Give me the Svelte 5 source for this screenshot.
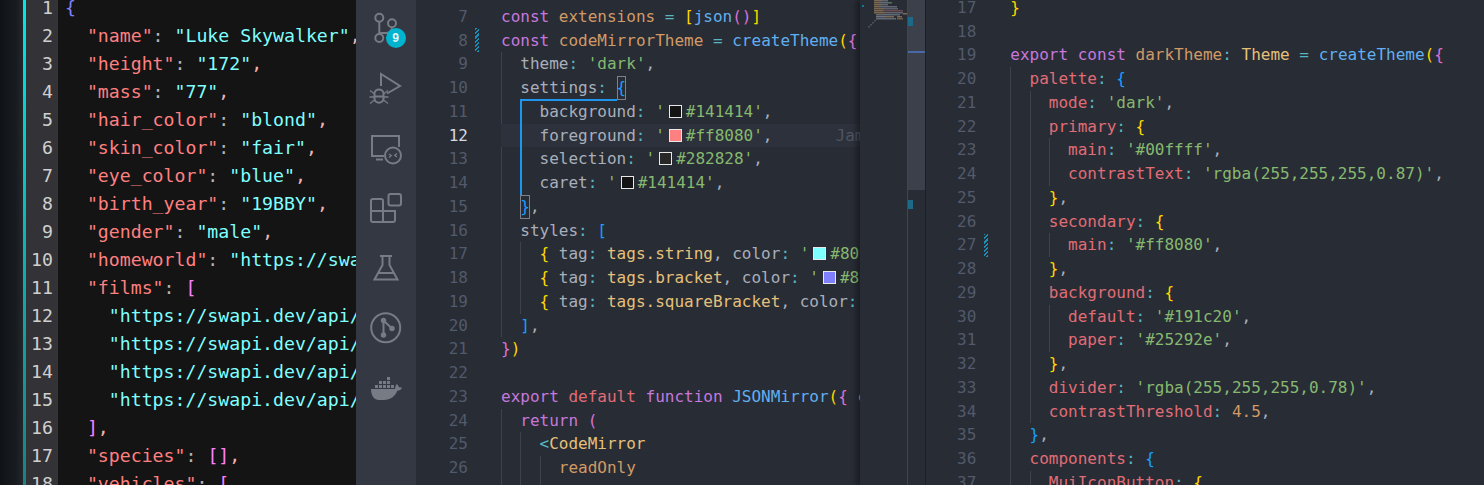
<script>
  const parse = (row) =>
    row.split('|').map((part) => {
      const i = part.indexOf('~');
      return i < 0 ? { c: '', s: part } : { c: part.slice(0, i), s: part.slice(i + 1) };
    });

  const jsonRows = [
    'jb~{',
    '  |jk~"name"|jp~: |js~"Luke Skywalker"|jc~,',
    '  |jk~"height"|jp~: |js~"172"|jc~,',
    '  |jk~"mass"|jp~: |js~"77"|jc~,',
    '  |jk~"hair_color"|jp~: |js~"blond"|jc~,',
    '  |jk~"skin_color"|jp~: |js~"fair"|jc~,',
    '  |jk~"eye_color"|jp~: |js~"blue"|jc~,',
    '  |jk~"birth_year"|jp~: |js~"19BBY"|jc~,',
    '  |jk~"gender"|jp~: |js~"male"|jc~,',
    '  |jk~"homeworld"|jp~: |js~"https://swapi.dev/api/planets/1/"|jc~,',
    '  |jk~"films"|jp~: |jm~[',
    '    |js~"https://swapi.dev/api/films/1/"|jc~,',
    '    |js~"https://swapi.dev/api/films/2/"|jc~,',
    '    |js~"https://swapi.dev/api/films/3/"|jc~,',
    '    |js~"https://swapi.dev/api/films/6/"',
    '  |jm~]|jc~,',
    '  |jk~"species"|jp~: |jm~[]|jc~,',
    '  |jk~"vehicles"|jp~: |jm~['
  ];

  const middleRows = [
    "k~const| |v~extensions| |o~=| |y~[|f~json|p~()|y~]",
    "k~const| |v~codeMirrorTheme| |o~=| |f~createTheme|y~(|p~{",
    "  theme|o~:| |s~'dark'|,",
    "  settings|o~:| |box~{",
    "    background|o~:| |s~'|sw~#141414|s~'|,",
    "    foreground|o~:| |s~'|sw~#ff8080|s~'|,|g~James",
    "    selection|o~:| |s~'|sw~#282828|s~'|,",
    "    caret|o~:| |s~'|sw~#141414|s~'|,",
    "  |box~}|,",
    "  styles|o~:| |b~[",
    "    |y~{| tag|o~:| |t~tags.string|, color|o~:| |s~'|sw~#80ffff|s~'| |y~}|,",
    "    |y~{| tag|o~:| |t~tags.bracket|, color|o~:| |s~'|sw~#8080ff|s~'| |y~}|,",
    "    |y~{| tag|o~:| |t~tags.squareBracket|, color|o~:| |s~'#ff80ff'| |y~}|,",
    "  |b~]|,",
    "p~}|y~)",
    "",
    "k~export| |r~default| |k~function| |f~JSONMirror|y~(|p~{| code",
    "  |k~return| |p~(",
    "    |o~<|t~CodeMirror",
    "      |v~readOnly",
    "      |v~value|o~=|b~{|v~code|b~}"
  ];

  const rightRows = [
    "y~}",
    "",
    "k~export| |k~const| |v~darkTheme|o~:| |t~Theme| |o~=| |f~createTheme|y~(|p~{",
    "  |r~palette|o~:| |b~{",
    "    |r~mode|o~:| |s~'dark'|,",
    "    |r~primary|o~:| |y~{",
    "      |r~main|o~:| |s~'#00ffff'|,",
    "      |r~contrastText|o~:| |s~'rgba(255,255,255,0.87)'|,",
    "    |y~}|,",
    "    |r~secondary|o~:| |y~{",
    "      |r~main|o~:| |s~'#ff8080'|,",
    "    |y~}|,",
    "    |r~background|o~:| |y~{",
    "      |r~default|o~:| |s~'#191c20'|,",
    "      |r~paper|o~:| |s~'#25292e'|,",
    "    |y~}|,",
    "    |r~divider|o~:| |s~'rgba(255,255,255,0.78)'|,",
    "    |r~contrastThreshold|o~:| |n~4.5|,",
    "  |b~}|,",
    "  |r~components|o~:| |b~{",
    "    |r~MuiIconButton|o~:| |y~{"
  ];

  const LH = 23.75;
  const INDENT = 19.27;
  // [depth, first line, last line], in file line numbers
  const middleGuides = [
    [0, 9, 20],
    [1, 17, 19],
    [0, 24, 28],
    [1, 25, 28],
    [2, 26, 28]
  ];
  const rightGuides = [
    [0, 20, 38],
    [1, 21, 34],
    [2, 23, 24],
    [2, 27, 27],
    [2, 30, 31],
    [1, 37, 38]
  ];

  const miniBars = [
    [874, 0, 8, '#7d6a55'], [882, 0, 6, '#5f6672'],
    [874, 2, 6, '#80684f'], [880, 2, 8, '#656c78'], [888, 2, 4, '#58705a'],
    [874, 4, 8, '#7d6a55'], [882, 4, 6, '#5f6672'],
    [874, 6, 6, '#80684f'], [880, 6, 17, '#626874'],
    [874, 8, 10, '#7b654f'], [884, 8, 14, '#5d5f6a'],
    [874, 10, 9, '#7d6a55'], [883, 10, 20, '#6b4a52'],
    [874, 12, 11, '#80684f'], [885, 12, 18, '#5f6672'], [903, 13, 4, '#7d6a55'],
    [876, 14, 18, '#626874'], [894, 14, 6, '#5f6672'],
    [876, 16, 10, '#6c7380'], [886, 16, 8, '#7d6a55'], [897, 16, 5, '#7d6a55'],
    [876, 18, 20, '#626874'], [897, 18, 6, '#6b5d50'],
    [874, 20, 2, '#4b505b'], [872, 22, 2, '#4b505b'], [870, 24, 2, '#4b505b'], [868, 26, 2, '#4b505b']
  ];
</script>

{#snippet rows(list, firstLine, activeLine)}
  {#each list as row, i}
    <div class="line" class:current={firstLine + i === activeLine}>
      {#each parse(row) as tok}
        {#if tok.c === 'sw'}
          <span class="swatch" style="background:{tok.s}"></span><span class="s">{tok.s}</span>
        {:else}
          <span class={tok.c}>{tok.s}</span>
        {/if}
      {/each}
    </div>
  {/each}
{/snippet}

{#snippet numbers(list, firstLine, activeLine)}
  {#each list as _, i}
    <div class="num" class:active={firstLine + i === activeLine}>{firstLine + i}</div>
  {/each}
{/snippet}

{#snippet guides(list, firstLine)}
  {#each list as [depth, from, to]}
    <i
      class="guide"
      style="left:{depth * INDENT}px;top:{(from - firstLine) * LH}px;height:{(to - from + 1) * LH}px"
    ></i>
  {/each}
{/snippet}

<main class="screen">
  <section class="json-pane">
    <div class="backdrop"></div>
    <div class="accent"></div>
    <div class="json-gutter">{@render numbers(jsonRows, 1, 0)}</div>
    <div class="json-code">{@render rows(jsonRows, 1, 0)}</div>
  </section>

  <nav class="activity">
    <div class="item">
      <svg viewBox="0 0 60 60">
        <circle cx="23.3" cy="19.7" r="4" />
        <circle cx="36" cy="25.3" r="4" />
        <circle cx="23.3" cy="40" r="4" />
        <path d="M23.3 24v12M36 29.3c0 4-3 5.700-6 5.700h-6.700" />
      </svg>
      <span class="badge">9</span>
    </div>
    <div class="item">
      <svg viewBox="0 0 60 60">
        <path d="M25 28V16l19 12-13 7.500" />
        <path d="M18.500 35.500c0-5.500 9-5.500 9 0v5c0 5.500-9 5.500-9 0zM18.500 38.500h9" />
        <path class="thin" d="M14 32.500l4.500 3.500M32 32.500L27.500 36M13.500 39h5M27.500 39h5M14 45.500l4.500-3.500M32 45.500L27.500 42" />
      </svg>
    </div>
    <div class="item">
      <svg viewBox="0 0 60 60">
        <path d="M28 38H16V18h27v11" />
        <path d="M20 41.500h7" />
        <circle cx="37" cy="37.5" r="8" />
        <path class="thin" d="M33 39.500l2.300-2-2.300-1.500M41 35.500l-2.300 2 2.300 1.500" />
      </svg>
    </div>
    <div class="item">
      <svg viewBox="0 0 60 60">
        <rect x="32.5" y="16" width="12.5" height="11.5" rx="2" />
        <path d="M27 33V23a2 2 0 0 0-2-2h-8a2 2 0 0 0-2 2v19a2 2 0 0 0 2 2h20a2 2 0 0 0 2-2v-9zM15 33h12M27 33v11" />
      </svg>
    </div>
    <div class="item">
      <svg viewBox="0 0 60 60">
        <path d="M24 18h12M26.500 18v9L18.500 41.500h23L33.500 27V18M22 35h16" />
      </svg>
    </div>
    <div class="item">
      <svg viewBox="0 0 60 60">
        <circle cx="29.7" cy="29.7" r="14.5" />
        <path d="M27.500 22.500V37M27.500 22.500l8.500 8" />
        <circle class="solid" cx="27.5" cy="22.5" r="2.7" />
        <circle class="solid" cx="27.5" cy="37" r="2.7" />
        <circle class="solid" cx="36" cy="30.5" r="2.7" />
      </svg>
    </div>
    <div class="item">
      <svg viewBox="0 0 60 60">
        <path
          class="solid"
          d="M15 31h24c.2-2 .8-3.600 1.800-5 1.200 1 2 2.300 2.200 3.500 1-.4 2.200-.3 3 .3-.8 2-2.500 3-4.700 3-2 5.500-7 9.200-13.300 9.200H23c-5 0-8-4.500-8-11z"
        />
        {#each [19, 23, 27, 31, 35] as x}<rect class="solid" {x} y="27" width="3" height="3" />{/each}
        {#each [23, 27, 31] as x}<rect class="solid" {x} y="23" width="3" height="3" />{/each}
        <rect class="solid" x="31" y="19" width="3" height="3" />
      </svg>
    </div>
  </nav>

  <section class="editor middle">
    <div class="gutter">{@render numbers(middleRows, 7, 12)}</div>
    <i class="hatch hatch-middle"></i>
    <div class="code">
      <div class="lines">
        {@render guides(middleGuides, 7)}
        <i class="active-guide"></i>
        {@render rows(middleRows, 7, 12)}
      </div>
    </div>
  </section>

  <aside class="overview">
    <svg class="minimap" viewBox="860 0 47 40" width="47" height="40">
      <rect x="862" y="5" width="2" height="2" fill="#0e7a9a" />
      {#each miniBars as [x, y, w, fill]}
        <rect {x} {y} width={w} height="1.500" {fill} />
      {/each}
    </svg>
    <div class="scroll">
      <div class="slider"></div>
      <i class="cursor-mark"></i>
      <i class="change change-a"></i>
      <i class="change change-b"></i>
    </div>
  </aside>

  <section class="editor right">
    <div class="gutter">{@render numbers(rightRows, 17, 0)}</div>
    <i class="hatch hatch-right"></i>
    <div class="code">
      <div class="lines">
        {@render guides(rightGuides, 17)}
        {@render rows(rightRows, 17, 0)}
      </div>
    </div>
  </section>
</main>

<style>
  :global(body) {
    background: #141414;
  }

  .screen {
    display: flex;
    width: 1484px;
    height: 485px;
    overflow: hidden;
    font-family: 'DejaVu Sans Mono', 'Liberation Mono', monospace;
  }

  .line {
    white-space: pre;
  }

  /* left: the json viewer */
  .json-pane {
    display: flex;
    flex: 0 0 356px;
    overflow: hidden;
    background: #141414;
    font-size: 18.2px;
    line-height: 28px;
  }

  .backdrop {
    flex: 0 0 23px;
    background: linear-gradient(90deg, #101316, #181c20 70%, #22272b);
  }

  .accent {
    flex: 0 0 3px;
    background: linear-gradient(180deg, #00e8e8, #12a0a0 70%, #1a8282);
  }

  .json-gutter {
    flex: 0 0 32px;
    box-sizing: border-box;
    padding-right: 5px;
    margin-top: -6px;
    height: 520px;
    background: #323237;
    text-align: right;
    color: #cfcfcf;
  }

  .json-code {
    flex: 1;
    min-width: 0;
    margin-top: -6px;
    padding-left: 7px;
    color: #c8c8c8;
  }

  .jk {
    color: #ff8080;
  }
  .js {
    color: #80ffff;
  }
  .jb {
    color: #8080ff;
  }
  .jm {
    color: #ff80ff;
  }
  .jp {
    color: #b4b4b4;
  }
  .jc {
    color: #f0b4b4;
  }

  /* activity bar */
  .activity {
    flex: 0 0 60px;
    display: flex;
    flex-direction: column;
    margin-top: -2px;
    height: 487px;
    background: #343842;
  }

  .item {
    position: relative;
    flex: 0 0 60px;
    height: 60px;
  }

  .item svg {
    display: block;
    width: 60px;
    height: 60px;
    fill: none;
    stroke: #777b84;
    stroke-width: 2;
  }

  .item svg .solid {
    fill: #777b84;
    stroke: none;
  }

  .item svg .thin {
    stroke-width: 1.3;
  }

  .badge {
    position: absolute;
    left: 29.5px;
    top: 29.5px;
    width: 20px;
    height: 20px;
    border-radius: 50%;
    background: #00b4d0;
    color: #e8f4f6;
    font-family: 'Liberation Sans', sans-serif;
    font-size: 12px;
    font-weight: 700;
    line-height: 20px;
    text-align: center;
  }

  /* editors */
  .editor {
    display: flex;
    position: relative;
    overflow: hidden;
    background: #282c35;
    color: #a8afbb;
    font-size: 16px;
    line-height: 23.75px;
  }

  .middle {
    flex: 0 0 444px;
  }

  .right {
    flex: 1;
    min-width: 0;
  }

  .gutter {
    box-sizing: border-box;
    text-align: right;
    color: #525a6b;
  }

  .middle .gutter {
    flex: 0 0 85px;
    padding-right: 33px;
    padding-top: 4.8px;
  }

  .right .gutter {
    flex: 0 0 84.3px;
    padding-right: 34px;
    margin-top: -4.2px;
  }

  .num.active {
    color: #d7dae0;
  }

  .code {
    flex: 1;
    min-width: 0;
  }

  .lines {
    position: relative;
  }

  .middle .lines {
    margin-top: 4.8px;
  }

  .right .lines {
    margin-top: -4.2px;
  }

  .line {
    height: 23.75px;
    position: relative;
  }

  .json-code .line {
    height: 28px;
  }

  .line.current {
    background: #2d313b;
  }

  .guide {
    position: absolute;
    width: 1px;
    background: #3d424d;
  }

  .active-guide {
    position: absolute;
    left: 19px;
    top: 94px;
    width: 97px;
    height: 96px;
    box-sizing: border-box;
    border-left: 2px solid #1e96ee;
    border-top: 2px solid #1e96ee;
    z-index: 1;
  }

  .hatch {
    position: absolute;
    width: 4px;
    background: repeating-linear-gradient(-45deg, #1b8fb8 0 1.5px, transparent 1.5px 3px);
  }

  .hatch-middle {
    left: 59px;
    top: 28px;
    height: 24px;
  }

  .hatch-right {
    left: 58px;
    top: 234px;
    height: 23px;
  }

  .k {
    color: #c678dd;
  }
  .r {
    color: #e06c75;
  }
  .v {
    color: #d19a66;
  }
  .f {
    color: #61afef;
  }
  .o {
    color: #56b6c2;
  }
  .s {
    color: #86b96f;
  }
  .t {
    color: #e5c07b;
  }
  .n {
    color: #d19a66;
  }
  .y {
    color: #ffd700;
  }
  .p {
    color: #da70d6;
  }
  .b {
    color: #179fff;
  }

  .box {
    display: inline-block;
    color: #179fff;
    box-shadow: inset 0 0 0 1px #7d828a;
  }

  .g {
    margin-left: 63px;
    color: #4f5460;
  }

  .swatch {
    display: inline-block;
    box-sizing: border-box;
    width: 13px;
    height: 13px;
    margin: 0 4px;
    border: 1px solid #e8e8e8;
    vertical-align: -1px;
  }

  /* minimap and scrollbar */
  .overview {
    flex: 0 0 66px;
    position: relative;
    display: flex;
    background: #282c35;
    box-shadow: -4px 0 5px rgba(0, 0, 0, 0.35);
    border-right: 1px solid #1c1f25;
    box-sizing: border-box;
  }

  .minimap {
    flex: 0 0 47px;
    display: block;
  }

  .scroll {
    position: relative;
    flex: 1;
    border-left: 1px solid #41454f;
  }

  .slider {
    height: 190px;
    background: #3b404b;
  }

  .cursor-mark {
    position: absolute;
    left: 0;
    right: 0;
    top: 51px;
    height: 2px;
    background: #4a68a5;
  }

  .change {
    position: absolute;
    left: 0;
    width: 5px;
    height: 9px;
    background: #1c6a88;
  }

  .change-a {
    top: 17px;
  }

  .change-b {
    top: 200px;
  }
</style>
